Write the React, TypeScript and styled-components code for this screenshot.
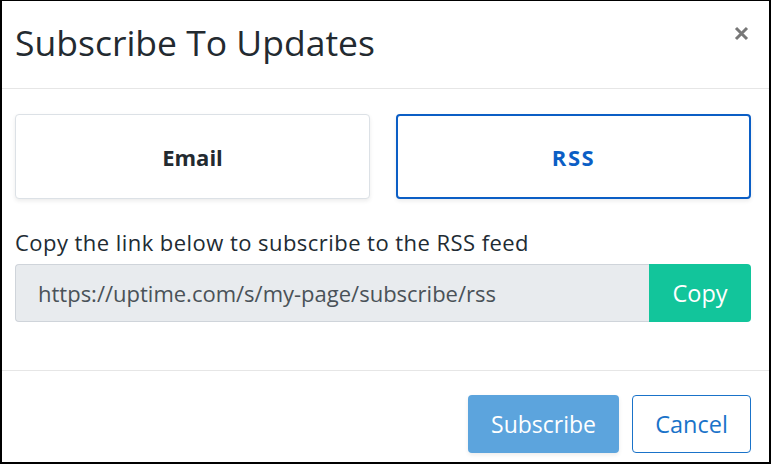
import { useState } from 'react';
import styled, { createGlobalStyle } from 'styled-components';

const GlobalStyle = createGlobalStyle`
    html, body {
        margin: 0;
        padding: 0;
        background: #fff;
    }
    body {
        font-family: 'Open Sans', 'Liberation Sans', Arial, sans-serif;
        color: #212b33;
    }
    * {
        box-sizing: border-box;
    }
`;

const RSS_URL = 'https://uptime.com/s/my-page/subscribe/rss';

export default function App() {
    const [tab, setTab] = useState<'email' | 'rss'>('rss');

    return (
        <>
            <GlobalStyle />
            <Modal>
                <Header>
                    <Title>Subscribe To Updates</Title>
                    <Close aria-label="Close">
                        <svg width="15" height="15" viewBox="0 0 15 15">
                            <path d="M2 2 L13 13 M13 2 L2 13" stroke="#777" strokeWidth="3" />
                        </svg>
                    </Close>
                </Header>
                <Body>
                    <Tabs>
                        <Tab $active={tab === 'email'} onClick={() => setTab('email')}>
                            Email
                        </Tab>
                        <Tab $active={tab === 'rss'} onClick={() => setTab('rss')}>
                            RSS
                        </Tab>
                    </Tabs>
                    <Label>Copy the link below to subscribe to the RSS feed</Label>
                    <InputGroup>
                        <LinkInput readOnly value={RSS_URL} />
                        <CopyButton>Copy</CopyButton>
                    </InputGroup>
                </Body>
                <Footer>
                    <SubscribeButton>Subscribe</SubscribeButton>
                    <CancelButton>Cancel</CancelButton>
                </Footer>
            </Modal>
        </>
    );
}

const Modal = styled.div`
    width: 771px;
    height: 464px;
    border: 2px solid #000;
    border-top-width: 1px;
    background: #fff;
    display: flex;
    flex-direction: column;
`;

const Header = styled.div`
    height: 88px;
    padding: 0 18px 0 13px;
    display: flex;
    align-items: center;
    justify-content: space-between;
    border-bottom: 1px solid #e6e6e6;
`;

const Title = styled.h1`
    margin: 0;
    font-size: 35.5px;
    line-height: 44px;
    font-weight: 400;
    color: #232a30;
    padding-bottom: 6px;
`;

const Close = styled.button`
    align-self: flex-start;
    border: 0;
    background: none;
    padding: 0;
    margin-top: 25px;
    margin-right: 2px;
    cursor: pointer;
    display: flex;
`;

const Body = styled.div`
    padding: 25px 18px 48px 13px;
    border-bottom: 1px solid #e6e6e6;
`;

const Tabs = styled.div`
    display: grid;
    grid-template-columns: 1fr 1fr;
    gap: 26px;
`;

const Tab = styled.button<{ $active: boolean }>`
    height: 85px;
    border-radius: 4px;
    background: #fff;
    font-family: inherit;
    font-size: 22px;
    font-weight: 700;
    cursor: pointer;
    border: ${(p) => (p.$active ? '2px solid #0b5ec5' : '1px solid #dce1e6')};
    color: ${(p) => (p.$active ? '#0b5ec5' : '#232a30')};
    letter-spacing: ${(p) => (p.$active ? '1.5px' : '0')};
    box-shadow: 0 2px 4px rgba(0, 0, 0, 0.08);
`;

const Label = styled.div`
    margin-top: 30px;
    font-size: 22px;
    line-height: 26px;
    letter-spacing: 0.45px;
    color: #212b33;
`;

const InputGroup = styled.div`
    margin-top: 9px;
    display: flex;
    height: 58px;
`;

const LinkInput = styled.input`
    flex: 1;
    min-width: 0;
    height: 100%;
    padding: 0 22px;
    font-family: inherit;
    font-size: 22px;
    color: #4a5258;
    background: #e8ebee;
    border: 1px solid #cfd4da;
    border-right: 0;
    border-radius: 4px 0 0 4px;
    outline: none;
`;

const CopyButton = styled.button`
    width: 102px;
    height: 100%;
    border: 0;
    border-radius: 0 4px 4px 0;
    background: #12c59b;
    color: #fff;
    font-family: inherit;
    font-size: 23.5px;
    cursor: pointer;
`;

const Footer = styled.div`
    flex: 1;
    padding: 24px 18px 0 13px;
    display: flex;
    align-items: flex-start;
    justify-content: flex-end;
    gap: 13px;
`;

const FooterButton = styled.button`
    height: 58px;
    border-radius: 4px;
    font-family: inherit;
    font-size: 23px;
    cursor: pointer;
`;

const SubscribeButton = styled(FooterButton)`
    width: 151px;
    border: 0;
    background: #5ca4dd;
    color: #fff;
    box-shadow: 0 2px 4px rgba(0, 0, 0, 0.08);
`;

const CancelButton = styled(FooterButton)`
    width: 119px;
    border: 1px solid #1a73c9;
    background: #fff;
    color: #1a73c9;
    font-size: 23.5px;
`;
